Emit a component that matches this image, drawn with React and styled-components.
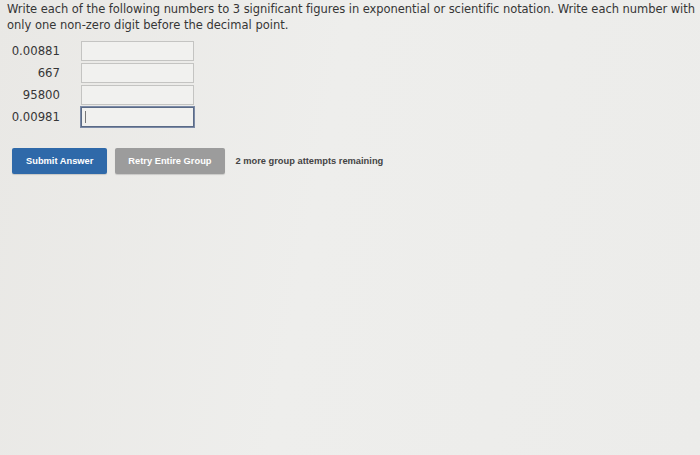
import styled, { createGlobalStyle } from 'styled-components'

const Global = createGlobalStyle`
  html, body { margin: 0; padding: 0; background: #ececea; }
  body { font-family: "DejaVu Sans", Verdana, sans-serif; color: #333; }
`

const Page = styled.div`
  width: 700px;
  height: 455px;
  overflow: hidden;
  padding: 1px 0 0 7px;
  box-sizing: border-box;
  background: linear-gradient(100deg, #e9e8e5 0%, #eeeeec 45%, #ececea 100%);
`

const Prompt = styled.p`
  margin: 0;
  font-size: 11.5px;
  white-space: nowrap;
  color: #363636;
`

const Line = styled.span`
  display: block;
  height: 16px;
  line-height: 16px;
  letter-spacing: ${p => p.$tight ? '-0.05px' : '0'};
`

const Rows = styled.div`
  display: grid;
  grid-template-columns: 53px 113px;
  column-gap: 21px;
  row-gap: 2px;
  margin-top: 8px;
  align-items: center;
`

const Label = styled.div`
  text-align: right;
  font-size: 11.7px;
  color: #363636;
`

const Field = styled.div`
  height: 20px;
  box-sizing: border-box;
  border: 1px solid ${p => (p.$focus ? '#5a6a86' : '#c4c4c2')};
  box-shadow: ${p => (p.$focus ? '0 0 0 1px #7b8aa6' : 'none')};
  background: #f1f1ef;
  position: relative;
  &::after {
    content: '';
    display: ${p => (p.$focus ? 'block' : 'none')};
    position: absolute;
    left: 3px;
    top: 3px;
    width: 1px;
    height: 12px;
    background: #777;
  }
`

const Actions = styled.div`
  display: flex;
  align-items: center;
  gap: 8px;
  margin-top: 21px;
  margin-left: 5px;
`

const Button = styled.button`
  height: 26px;
  padding: 0 ${p => p.$pad}px;
  border: none;
  border-radius: 2px;
  background: ${p => p.$bg};
  color: #fff;
  font-family: "Liberation Sans", Arial, sans-serif;
  font-weight: 700;
  font-size: 9.3px;
  box-shadow: 0 1px 1px rgba(0,0,0,0.15);
`

const Note = styled.span`
  margin-left: 3px;
  font-family: "Liberation Sans", Arial, sans-serif;
  font-weight: 700;
  font-size: 9.3px;
  color: #444;
`

const items = ['0.00881', '667', '95800', '0.00981']

export default function App() {
  return (
    <Page>
      <Global />
      <Prompt>
        <Line $tight>Write each of the following numbers to 3 significant figures in exponential or scientific notation. Write each number with</Line>
        <Line>only one non-zero digit before the decimal point.</Line>
      </Prompt>
      <Rows>
        {items.map((v, i) => (
          <>
            <Label key={'l' + i}>{v}</Label>
            <Field key={'f' + i} $focus={i === 3} />
          </>
        ))}
      </Rows>
      <Actions>
        <Button $bg="#2f69a9" $pad={14}>Submit Answer</Button>
        <Button $bg="#9c9c9c" $pad={13}>Retry Entire Group</Button>
        <Note>2 more group attempts remaining</Note>
      </Actions>
    </Page>
  )
}
